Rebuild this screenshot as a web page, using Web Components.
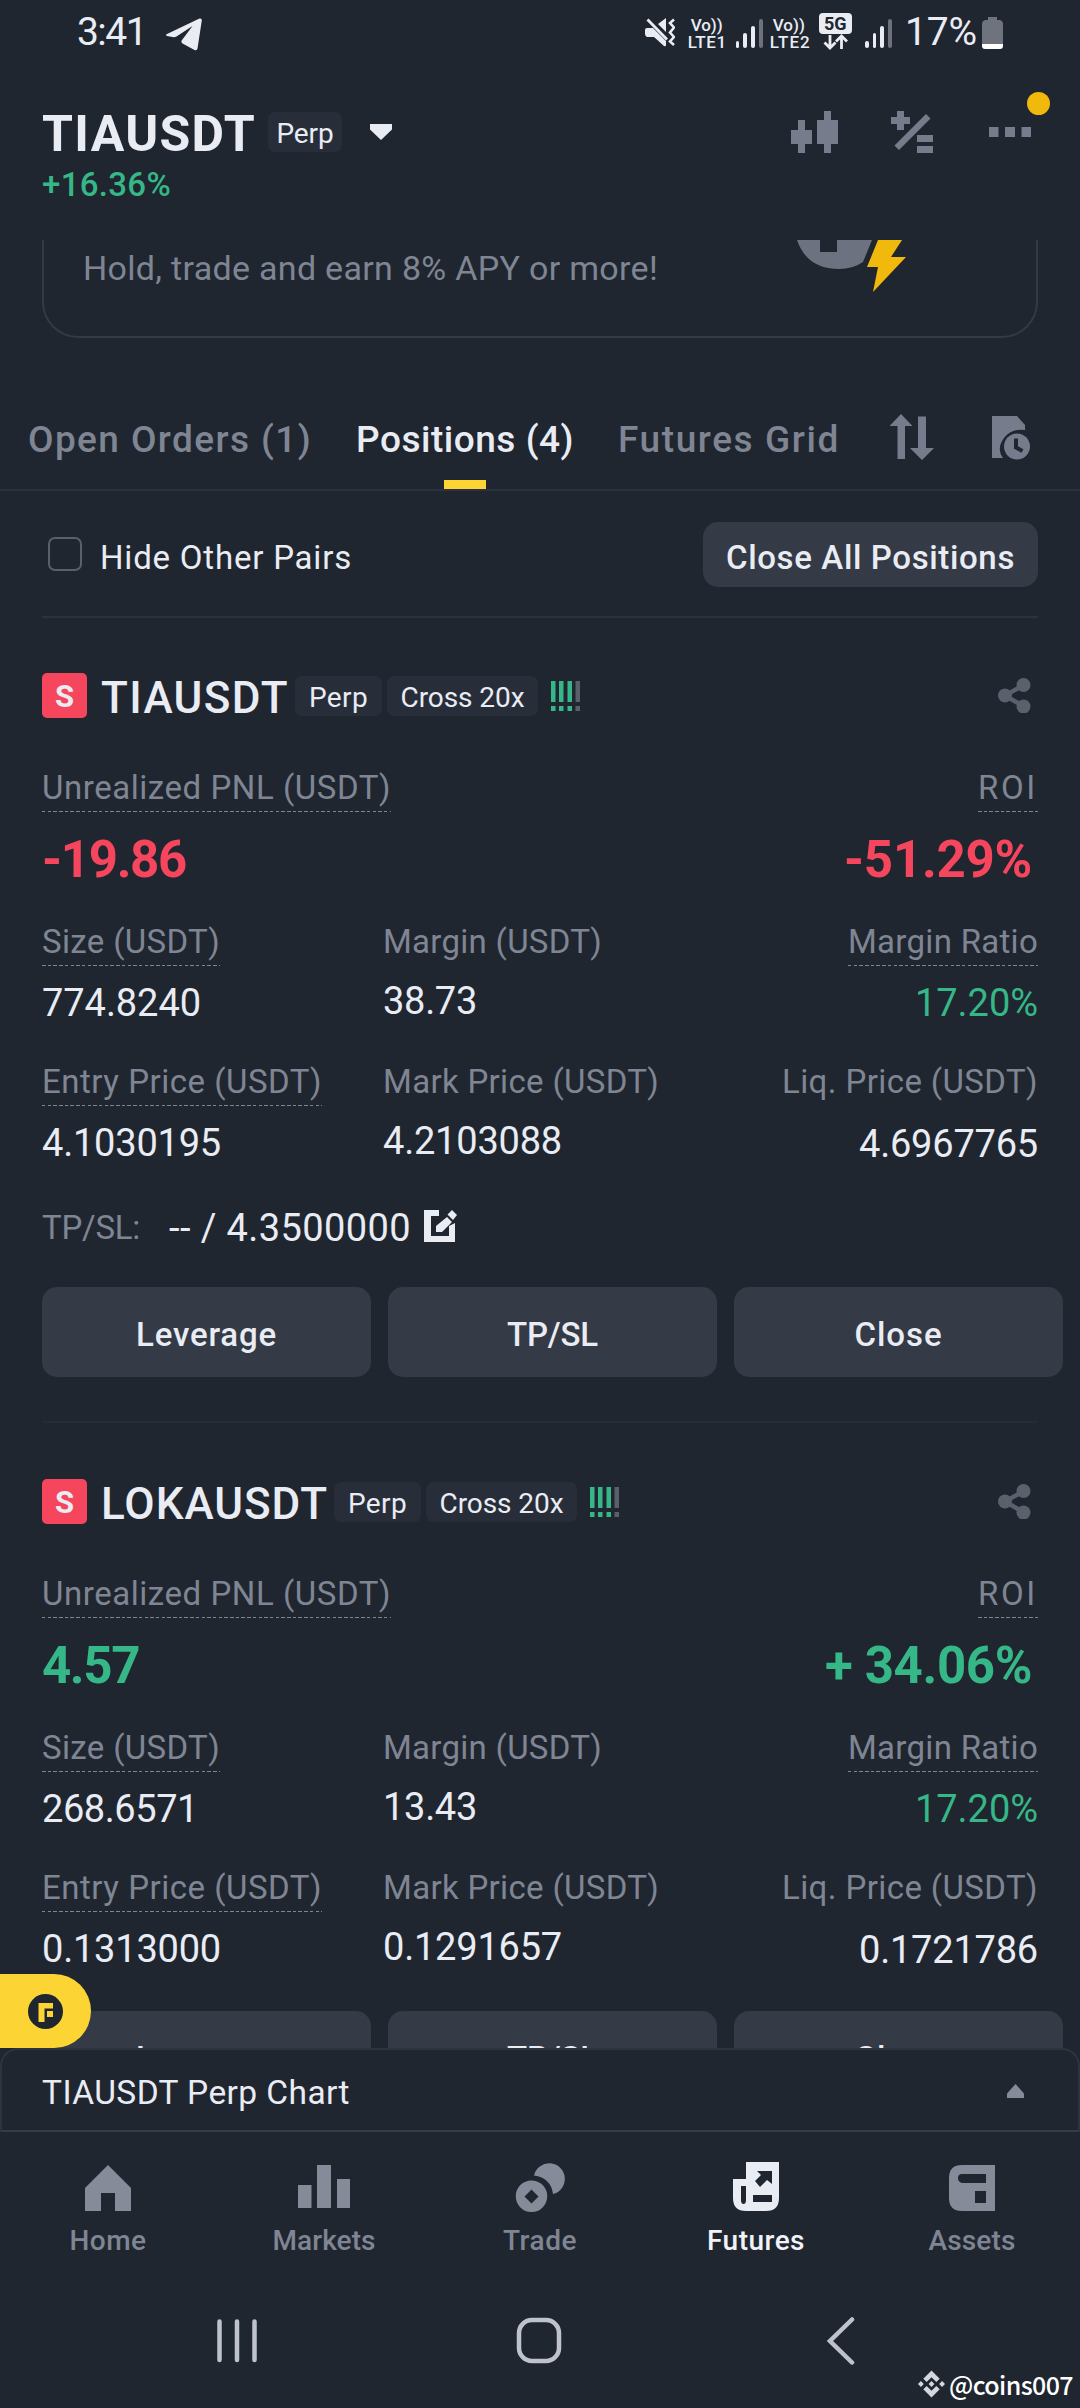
<!DOCTYPE html>
<html lang="en">
<head>
<meta charset="utf-8">
<title>Futures positions</title>
<style>
  body {
    margin: 0;
    background: #1f2630;
    color: #eaecf4;
    font-family: Roboto, 'Liberation Sans', sans-serif;
    --bg: #1f2630;
    --muted: #7f8593;
    --icon: #767c8b;
    --line: #2b323d;
    --chip: #282e39;
    --button: #343a46;
    --green: #36b787;
    --red: #f6465d;
    --yellow: #fcd535;
  }
</style>
</head>
<body>
<app-screen></app-screen>

<script>
// Text that is tracked to an exact width given in the "w" attribute
class FitText extends HTMLElement {
  constructor() {
    super();
    this.attachShadow({ mode: 'open' });
    this.shadowRoot.innerHTML = `
      <style>
        :host { display: block; flex: none; }
        span { display: inline-block; white-space: pre; vertical-align: top; }
      </style>
      <span><slot></slot></span>
    `;
  }

  connectedCallback() {
    const w = parseFloat(this.getAttribute('w'));
    const span = this.shadowRoot.querySelector('span');
    const natural = span.getBoundingClientRect().width;
    const count = this.textContent.length;
    span.style.letterSpacing = (w - natural) / count + 'px';
    this.style.width = w + 'px';
  }
}

class SignalBars extends HTMLElement {
  constructor() {
    super();
    this.attachShadow({ mode: 'open' });
    this.shadowRoot.innerHTML = `
      <style>
        :host { display: flex; align-items: flex-end; gap: 4px; height: 29px; }
        i { width: 3.8px; border-radius: 2px; background: #eaecf4; }
        i:last-child { background: #6c717c; }
      </style>
      <i style="height:7px"></i><i style="height:15px"></i><i style="height:22px"></i><i style="height:29px"></i>
    `;
  }
}

class StatusBar extends HTMLElement {
  constructor() {
    super();
    this.attachShadow({ mode: 'open' });
    this.shadowRoot.innerHTML = `
      <style>
        :host {
          display: flex;
          align-items: center;
          height: 65px;
          padding: 0 77px 0 77px;
          box-sizing: border-box;
          font-size: 39px;
          line-height: 65px;
        }
        svg { display: block; flex: none; }
        .push { margin-left: auto; }
        .volte { font-size: 17px; line-height: 17px; font-weight: 500; margin-top: 3px; }
        .volte fit-text:first-child { margin-left: 3px; }
        .net { margin: -2px 13px 0 8px; width: 33px; }
        .net b {
          display: block;
          height: 21px;
          line-height: 22px;
          border-radius: 4px;
          background: #eaecf4;
          color: var(--bg);
          font-size: 18px;
          text-align: center;
        }
        signal-bars { margin-top: 1px; }
      </style>
      <fit-text w="69">3:41</fit-text>
      <svg style="margin:3px 0 0 20px" width="36" height="33" viewBox="166 18 36 33"><path fill="#eaecf4" d="M167 34 199.500 18.500Q202 18 201.800 20.500L197.500 48.500Q197 51 194.500 50L182.500 43.500Q180.500 42 182 40L192.500 26 176.500 36.500Q174.500 37.500 172.500 37L167 36Q165 35 167 34Z"/></svg>
      <svg class="push" width="30" height="30" viewBox="643 18 30 30">
        <path fill="#eaecf4" d="M643 30q0-2 2-2h6l13 13v4q0 2-2 1l-10-9h-7q-2-1-2-3zM656 24l8-6v14z"/>
        <path d="M645.500 19.500 665 39.500" stroke="#eaecf4" stroke-width="2.800"/>
        <path fill="none" stroke="#eaecf4" stroke-width="2.600" d="M672 19.500l-4 3.500 4 4.500-4 5 4 4.500-4 4.500 4 3.500"/>
      </svg>
      <div class="volte" style="margin-left:13px"><fit-text w="32">Vo))</fit-text><fit-text w="39">LTE1</fit-text></div>
      <signal-bars style="margin-left:9px"></signal-bars>
      <div class="volte" style="margin-left:7px"><fit-text w="32">Vo))</fit-text><fit-text w="41">LTE2</fit-text></div>
      <div class="net"><b>5G</b>
        <svg style="margin-left:4px" width="25" height="16" viewBox="0 0 25 16"><path fill="none" stroke="#eaecf4" stroke-width="2.800" d="M7 1v13M1.500 8.500 7 14l5.500-5.500M18.500 15V2M13 7.500 18.500 2 24 7.500"/></svg>
      </div>
      <signal-bars></signal-bars>
      <fit-text style="margin-left:13px" w="72">17%</fit-text>
      <svg style="margin-left:5px" width="21" height="32" viewBox="0 0 21 32"><path fill="#6f737d" d="M6 0h9v3h3q3 1 3 4v20H0V7q0-3 3-4h3z"/><path fill="#fff" d="M0 27h21v2q0 3-3 3H3q-3 0-3-3z"/></svg>
    `;
  }
}

class TagChip extends HTMLElement {
  constructor() {
    super();
    this.attachShadow({ mode: 'open' });
    this.shadowRoot.innerHTML = `
      <style>
        :host {
          display: flex;
          flex: none;
          justify-content: center;
          box-sizing: border-box;
          height: 40px;
          padding-top: 4px;
          border-radius: 7px;
          background: var(--chip);
          font-size: 28px;
          line-height: 36px;
        }
      </style>
      <slot></slot>
    `;
  }
}

class PairHeader extends HTMLElement {
  constructor() {
    super();
    this.attachShadow({ mode: 'open' });
    this.shadowRoot.innerHTML = `
      <style>
        :host { display: block; height: 175px; padding: 37px 49px 0 42px; box-sizing: border-box; }
        .row { display: flex; align-items: center; height: 60px; }
        .pair { font-size: 50px; font-weight: 700; line-height: 60px; padding-top: 4px; }
        .change { font-size: 33px; font-weight: 500; line-height: 44px; color: var(--green); margin-top: 1px; }
        svg { display: block; flex: none; }
        .more { position: relative; margin-left: 56px; }
        .more::after {
          content: '';
          position: absolute;
          width: 23px;
          height: 23px;
          right: -19px;
          top: -35px;
          border-radius: 50%;
          background: #f0b90b;
        }
      </style>
      <div class="row">
        <fit-text class="pair" w="214">TIAUSDT</fit-text>
        <tag-chip style="width:74px;margin-left:12px"><fit-text w="57">Perp</fit-text></tag-chip>
        <svg style="margin-left:28px" width="22" height="16" viewBox="0 0 22 16"><path fill="#eaecf4" d="M0 0h22v5.500L11 16 0 5.500z"/></svg>
        <svg style="margin-left:auto" width="47" height="42" viewBox="0 0 47 42"><path fill="#767c8b" d="M7 9h7v10h7v14h-7v9H7v-9H0V19h7zM33 0h7v9h7v24h-7v9h-7v-9h-7V9h7z"/></svg>
        <svg style="margin-left:53px" width="42" height="42" viewBox="0 0 42 42"><path fill="#767c8b" d="M6 0h7v6h6v7h-6v6H6v-6H0V6h6zM35 3l4.500 4.500L8 39l-4.500-4.500zM26 24h16v7H26zM26 35h16v7H26z"/></svg>
        <div class="more"><svg width="42" height="10" viewBox="0 0 42 10"><path fill="#767c8b" d="M0 0h9.500v10H0zM16 0h10v10H16zM32.500 0H42v10h-9.500z"/></svg></div>
      </div>
      <fit-text class="change" w="129">+16.36%</fit-text>
    `;
  }
}

class PromoCard extends HTMLElement {
  constructor() {
    super();
    this.attachShadow({ mode: 'open' });
    this.shadowRoot.innerHTML = `
      <style>
        :host {
          display: flex;
          height: 98px;
          margin: 0 42px;
          box-sizing: border-box;
          border: 2.500px solid #333a45;
          border-top: 0;
          border-radius: 0 0 36px 36px;
          color: var(--muted);
          font-size: 34px;
        }
        fit-text { margin: 5px 0 0 39px; line-height: 46px; }
        svg { display: block; margin-left: 139px; }
      </style>
      <fit-text w="575">Hold, trade and earn 8% APY or more!</fit-text>
      <svg width="110" height="53" viewBox="797 240 110 53">
        <path fill="#6d7280" d="M797 240q10 29 42 29 14 0 24-7l9-22h-35v12h-17v-12z"/>
        <path fill="#f0b90b" d="M878 240h24l-11 17h15l-33 35 5-25h-11z"/>
      </svg>
    `;
  }
}

class OrderTabs extends HTMLElement {
  constructor() {
    super();
    this.attachShadow({ mode: 'open' });
    this.shadowRoot.innerHTML = `
      <style>
        :host {
          display: flex;
          height: 153px;
          box-sizing: border-box;
          border-bottom: 2px solid var(--line);
          padding: 78px 50px 0 28px;
          font-size: 37px;
          font-weight: 500;
          line-height: 48px;
          color: var(--muted);
        }
        .active { display: flex; flex-direction: column; align-items: center; margin: 0 44px; color: #eaecf4; }
        .active i { width: 42px; height: 9px; margin-top: auto; background: var(--yellow); }
        svg { display: block; flex: none; }
      </style>
      <fit-text w="284">Open Orders (1)</fit-text>
      <div class="active"><fit-text w="218">Positions (4)</fit-text><i></i></div>
      <fit-text w="222">Futures Grid</fit-text>
      <svg style="margin:-2px 0 0 auto" width="45" height="46" viewBox="889 414 45 46"><path fill="#767c8b" d="M901 414l11.500 12H905v33h-7.500v-33H889.500zM918 416.500h8V448h8L922 460l-12-12h8z"/></svg>
      <svg style="margin-left:58px" width="38" height="44" viewBox="992 416 38 44"><path fill="#767c8b" d="M992 416h25l8 9v5q-13-2-21 8-8 11-1 20h-11z"/><circle cx="1017" cy="446.500" r="13" fill="#767c8b"/><path fill="none" stroke="#1f2630" stroke-width="4" d="M1016 438.500v9l6.500 3.500"/></svg>
    `;
  }
}

class FilterBar extends HTMLElement {
  constructor() {
    super();
    this.attachShadow({ mode: 'open' });
    this.shadowRoot.innerHTML = `
      <style>
        :host {
          display: flex;
          height: 127px;
          box-sizing: border-box;
          margin: 0 42px;
          padding-top: 31px;
          border-bottom: 2px solid var(--line);
          font-size: 33px;
          line-height: 65px;
        }
        .box { width: 34px; height: 34px; box-sizing: border-box; border: 2.500px solid #5a606b; border-radius: 7px; margin: 15px 18px 0 6px; }
        .text { padding-top: 3px; }
        button {
          display: flex;
          margin: 0 0 0 auto;
          width: 335px;
          height: 65px;
          padding: 3px 0 0 23px;
          border: 0;
          border-radius: 15px;
          background: var(--button);
          color: inherit;
          font: inherit;
          font-weight: 500;
        }
      </style>
      <div class="box"></div>
      <fit-text class="text" w="252">Hide Other Pairs</fit-text>
      <button><fit-text w="289">Close All Positions</fit-text></button>
    `;
  }
}

class StatLabel extends HTMLElement {
  constructor() {
    super();
    this.attachShadow({ mode: 'open' });
    this.shadowRoot.innerHTML = `
      <style>
        :host { display: block; height: 46px; color: var(--muted); font-size: 33px; line-height: 44px; }
        div { display: inline-block; height: 46px; vertical-align: top; }
        :host([hint]) div {
          background: repeating-linear-gradient(90deg, #7f8593 0 3.500px, transparent 3.500px 5.700px) 0 100% / 100% 1.500px no-repeat;
        }
      </style>
      <div><slot></slot></div>
    `;
  }
}

class PositionCard extends HTMLElement {
  constructor() {
    super();
    this.attachShadow({ mode: 'open' });
  }

  connectedCallback() {
    const a = name => this.getAttribute(name);
    const fit = name => {
      const [text, w] = a(name).split('|');
      return `<fit-text w="${w}">${text}</fit-text>`;
    };
    this.shadowRoot.innerHTML = `
      <style>
        :host { display: block; flex: none; height: 806px; }
        .body { padding: 55px 42px 0; }
        .head { display: flex; align-items: center; height: 45px; }
        .side {
          width: 45px;
          height: 45px;
          box-sizing: border-box;
          padding-top: 1px;
          border-radius: 5px;
          background: var(--red);
          font-size: 31px;
          font-weight: 700;
          line-height: 45px;
          text-align: center;
        }
        .pair { margin: 6px 6px 0 14px; font-size: 44px; font-weight: 500; line-height: 45px; }
        svg { display: block; flex: none; }
        .pnl { display: flex; justify-content: space-between; margin-top: 48px; }
        .pnl > div:last-child { display: flex; flex-direction: column; align-items: flex-end; }
        .big { font-size: 51px; font-weight: 700; line-height: 95px; height: 95px; color: var(${a('tone')}); }
        .big:last-child { margin-right: 6px; }
        .left { margin-right: 0 !important; }
        .grid { display: grid; grid-template-columns: 341px 1fr auto; grid-auto-rows: 120px; row-gap: 20px; margin-top: 13px; }
        .grid > div:nth-child(3n) { display: flex; flex-direction: column; align-items: flex-end; }
        .val { font-size: 38px; line-height: 74px; }
        .mid { line-height: 70px; }
        .low { line-height: 76px; }
        .ok { color: var(--green); }
        .tpsl { display: flex; height: 82px; padding-top: 10px; box-sizing: border-box; line-height: 76px; font-size: 38px; }
        .tpsl .name { font-size: 33px; color: var(--muted); margin-right: 29px; }
        .tpsl svg { margin: 19px 0 0 13px; }
        .actions { display: grid; grid-template-columns: repeat(3, 329px); gap: 17px; width: max-content; margin-top: 25px; }
        .actions button {
          display: flex;
          justify-content: center;
          height: 90px;
          padding: 3px 0 0;
          border: 0;
          border-radius: 15px;
          background: var(--button);
          color: inherit;
          font: inherit;
          font-size: 33px;
          font-weight: 500;
          line-height: 90px;
        }
        hr { margin: 44px 0 0; border: 0; border-top: 2px solid #262c37; }
      </style>
      <div class="body">
        <div class="head">
          <div class="side">S</div>
          <div class="pair">${fit('pair')}</div>
          <tag-chip style="width:87px"><fit-text w="59">Perp</fit-text></tag-chip>
          <tag-chip style="width:151px;margin-left:5px"><fit-text w="124">Cross 20x</fit-text></tag-chip>
          <svg style="margin-left:13px" width="29" height="30" viewBox="0 0 29 30"><path fill="#36b787" d="M0 0h4.500v21H0zM8 0h4.500v21H8zM16.500 0H21v21h-4.500zM0 25h4.500v5H0zM8 25h4.500v5H8zM16.500 25H21v5h-4.500z"/><path fill="#5a5f6b" d="M24.500 0H29v21h-4.500zM24.500 25H29v5h-4.500z"/></svg>
          <svg style="margin:0 7px 0 auto" width="33" height="35" viewBox="998 677 33 35"><g fill="#5a606c"><circle cx="1005" cy="694.500" r="7"/><circle cx="1023.500" cy="684" r="7"/><circle cx="1023.500" cy="705.500" r="7"/></g><path fill="none" stroke="#5a606c" stroke-width="4.500" d="M1023 684.500 1005 694.500l18 10.500"/></svg>
        </div>
        <div class="pnl">
          <div><stat-label hint><fit-text w="349">Unrealized PNL (USDT)</fit-text></stat-label><div class="big left">${fit('pnl')}</div></div>
          <div><stat-label hint><fit-text w="60">ROI</fit-text></stat-label><div class="big">${fit('roi')}</div></div>
        </div>
        <div class="grid">
          <div><stat-label hint><fit-text w="178">Size (USDT)</fit-text></stat-label><div class="val">${fit('size')}</div></div>
          <div><stat-label><fit-text w="219">Margin (USDT)</fit-text></stat-label><div class="val mid">${fit('margin')}</div></div>
          <div><stat-label hint><fit-text w="190">Margin Ratio</fit-text></stat-label><div class="val ok"><fit-text w="123">17.20%</fit-text></div></div>
          <div><stat-label hint><fit-text w="280">Entry Price (USDT)</fit-text></stat-label><div class="val">${fit('entry')}</div></div>
          <div><stat-label><fit-text w="276">Mark Price (USDT)</fit-text></stat-label><div class="val mid">${fit('mark')}</div></div>
          <div><stat-label><fit-text w="256">Liq. Price (USDT)</fit-text></stat-label><div class="val low">${fit('liq')}</div></div>
        </div>
        ${this.hasAttribute('tpsl') ? `
        <div class="tpsl">
          <fit-text class="name" w="98">TP/SL:</fit-text>${fit('tpsl')}
          <svg width="33" height="33" viewBox="0 0 33 33"><path fill="#eaecf4" d="M0 1h15v6H7v20h18V17l6-3v19H0zM23 8l5 5-10 10h-6v-6zM28 1l5 5-4 5-5.500-5.500z"/></svg>
        </div>` : ''}
        <div class="actions">
          <button><fit-text w="141">Leverage</fit-text></button>
          <button><fit-text w="91">TP/SL</fit-text></button>
          <button><fit-text w="88">Close</fit-text></button>
        </div>
        <hr>
      </div>
    `;
  }
}

class FloatingPill extends HTMLElement {
  constructor() {
    super();
    this.attachShadow({ mode: 'open' });
    this.shadowRoot.innerHTML = `
      <style>
        :host {
          position: absolute;
          left: 0;
          bottom: 0;
          display: flex;
          align-items: center;
          width: 91px;
          height: 74px;
          box-sizing: border-box;
          padding-left: 28px;
          border-radius: 0 37px 37px 0;
          background: var(--yellow);
        }
      </style>
      <svg width="35" height="35" viewBox="0 0 35 35"><circle cx="17.500" cy="17.500" r="17.500" fill="#1f2630"/><path fill="#fcd535" d="M10.500 9H25v5.500h-8.500V28h-6zM19 17h6v6h-6z"/></svg>
    `;
  }
}

class ChartBar extends HTMLElement {
  constructor() {
    super();
    this.attachShadow({ mode: 'open' });
    this.shadowRoot.innerHTML = `
      <style>
        :host {
          display: flex;
          align-items: center;
          justify-content: space-between;
          height: 84px;
          box-sizing: border-box;
          padding: 5px 54px 0 40px;
          border: 2px solid #2d343f;
          border-radius: 18px 18px 0 0;
          border-bottom-color: #363c47;
          font-size: 33.500px;
          line-height: 76px;
        }
      </style>
      <fit-text w="308">TIAUSDT Perp Chart</fit-text>
      <svg width="17" height="14" viewBox="0 0 17 14" style="margin:-4px 0 0"><path fill="#858b99" d="M0 14V9.500L8.500 0 17 9.500V14z"/></svg>
    `;
  }
}

class NavItem extends HTMLElement {
  constructor() {
    super();
    this.attachShadow({ mode: 'open' });
    this.shadowRoot.innerHTML = `
      <style>
        :host {
          display: flex;
          flex-direction: column;
          align-items: center;
          color: var(--muted);
          font-size: 28px;
          font-weight: 500;
          line-height: 36px;
        }
        :host([active]) { color: #f2f3f8; }
        .icon { height: 51px; margin: 29px 0 11px; }
      </style>
      <div class="icon"><slot name="icon"></slot></div>
      <slot></slot>
    `;
  }
}

class BottomNav extends HTMLElement {
  constructor() {
    super();
    this.attachShadow({ mode: 'open' });
    this.shadowRoot.innerHTML = `
      <style>
        :host { display: grid; grid-template-columns: repeat(5, 1fr); height: 143px; }
        svg { display: block; fill: #858b99; }
      </style>
      <nav-item><svg slot="icon" width="52" height="52" viewBox="82 2161 52 52"><path d="M108 2165l23 23v23h-16v-18h-14v18H85v-23z"/></svg><fit-text w="77">Home</fit-text></nav-item>
      <nav-item><svg slot="icon" width="52" height="52" viewBox="298 2161 52 52"><path d="M298 2185h13.500v23H298zM317 2165h14v43h-14zM337 2179h13v29h-13z"/></svg><fit-text w="103">Markets</fit-text></nav-item>
      <nav-item><svg slot="icon" width="52" height="52" viewBox="514 2161 52 52"><path fill-rule="evenodd" d="M531.500 2180.500a15.500 15.500 0 1 0 0 31.500 15.500 15.500 0 1 0 0-31.500zM531.500 2189.500l7 7-7 7-7-7z"/><path d="M534 2175.500a15.600 15.600 0 1 1 19 18.500q-2-16-19-18.500z"/></svg><fit-text w="74">Trade</fit-text></nav-item>
      <nav-item active><svg slot="icon" width="52" height="52" viewBox="730 2161 52 52"><path fill="#eaecf4" fill-rule="evenodd" d="M746 2162h33v36q0 13-13 13h-20q-13 0-13-13v-19h13zM741 2186v14q0 4 2.500 4t2.500-4v-14zM753 2195v7h19v-7zM757 2171l4 4-6 6 5 6 7-7 5 4v-13z"/></svg><fit-text w="98">Futures</fit-text></nav-item>
      <nav-item><svg slot="icon" width="52" height="52" viewBox="946 2161 52 52"><path fill-rule="evenodd" d="M962 2165h33v46h-33q-13 0-13-13v-20q0-13 13-13zM962 2174q-4 0-4 4t4 5h24v-9zM975 2191v12h11v-12z"/></svg><fit-text w="87">Assets</fit-text></nav-item>
    `;
  }
}

class SystemKeys extends HTMLElement {
  constructor() {
    super();
    this.attachShadow({ mode: 'open' });
    this.shadowRoot.innerHTML = `
      <style>
        :host { display: block; height: 133px; }
        .keys { display: flex; height: 92px; padding: 41px 225px 0 216px; box-sizing: border-box; justify-content: space-between; }
        .keys svg { display: block; fill: none; stroke: #bfc2cb; stroke-width: 4.500; stroke-linecap: round; }
        .keys .home { margin-right: 8px; }
        .mark {
          display: flex;
          justify-content: flex-end;
          align-items: center;
          gap: 4px;
          height: 34px;
          padding-right: 7px;
          color: #fff;
          font: 500 25px/34px 'Noto Sans CJK SC', 'Noto Sans', sans-serif;
        }
      </style>
      <div class="keys">
        <svg width="43" height="48" viewBox="0 0 43 48"><path d="M3.500 5.500v38.500M21 5.500v38.500M38.500 5.500v38.500"/></svg>
        <svg class="home" width="46" height="48" viewBox="0 0 46 48"><rect x="3" y="4" width="40" height="41" rx="13"/></svg>
        <svg width="28" height="50" viewBox="0 0 28 50"><path d="M25 3.500 3 25l22 21.500"/></svg>
      </div>
      <div class="mark">
        <svg width="27" height="28" viewBox="0 0 28 28"><path fill="#d5d6de" d="M14 0l8.500 8.500-3.500 3.500-5-5-5 5-3.500-3.500zM14 28l8.500-8.500L19 16l-5 5-5-5-3.500 3.500zM14 11l3 3-3 3-3-3zM3 11l3 3-3 3-3-3zM25 11l3 3-3 3-3-3z"/></svg>
        <fit-text w="124">@coins007</fit-text>
      </div>
    `;
  }
}

class AppScreen extends HTMLElement {
  constructor() {
    super();
    this.attachShadow({ mode: 'open' });
    this.shadowRoot.innerHTML = `
      <style>
        :host { display: flex; flex-direction: column; width: 1080px; height: 2408px; overflow: hidden; background: var(--bg); }
        :host > * { flex: none; }
        main { position: relative; height: 1430px; overflow: hidden; }
      </style>
      <status-bar></status-bar>
      <pair-header></pair-header>
      <promo-card></promo-card>
      <order-tabs></order-tabs>
      <filter-bar></filter-bar>
      <main>
        <position-card tone="--red" pair="TIAUSDT|188" pnl="-19.86|144" roi="-51.29%|188"
          size="774.8240|159" margin="38.73|94" entry="4.1030195|179" mark="4.2103088|179"
          liq="4.6967765|179" tpsl="-- / 4.3500000|242"></position-card>
        <position-card tone="--green" pair="LOKAUSDT|227" pnl="4.57|97" roi="+ 34.06%|207"
          size="268.6571|156" margin="13.43|94" entry="0.1313000|179" mark="0.1291657|179"
          liq="0.1721786|179"></position-card>
        <floating-pill></floating-pill>
      </main>
      <chart-bar></chart-bar>
      <bottom-nav></bottom-nav>
      <system-keys></system-keys>
    `;
  }
}

customElements.define('fit-text', FitText);
customElements.define('signal-bars', SignalBars);
customElements.define('status-bar', StatusBar);
customElements.define('tag-chip', TagChip);
customElements.define('pair-header', PairHeader);
customElements.define('promo-card', PromoCard);
customElements.define('order-tabs', OrderTabs);
customElements.define('filter-bar', FilterBar);
customElements.define('stat-label', StatLabel);
customElements.define('position-card', PositionCard);
customElements.define('floating-pill', FloatingPill);
customElements.define('chart-bar', ChartBar);
customElements.define('nav-item', NavItem);
customElements.define('bottom-nav', BottomNav);
customElements.define('system-keys', SystemKeys);
customElements.define('app-screen', AppScreen);
</script>
</body>
</html>
